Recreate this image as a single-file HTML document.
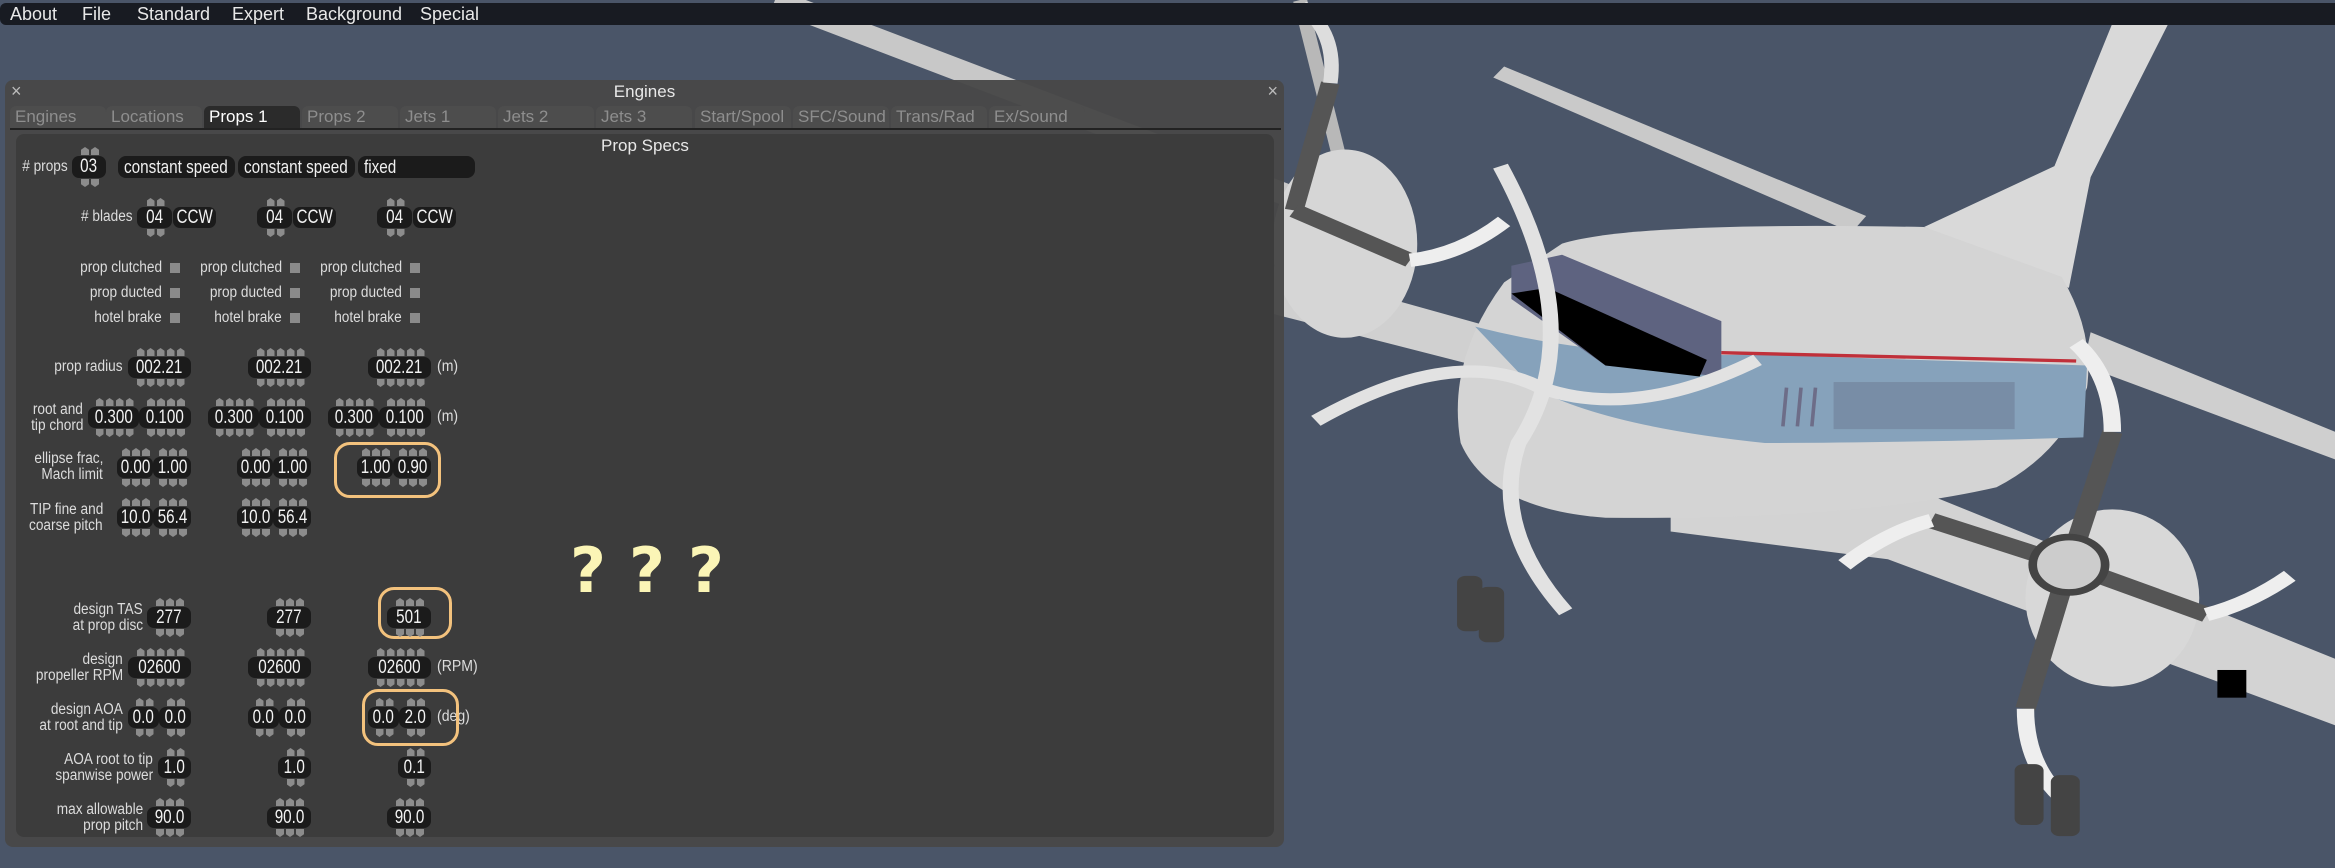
<!DOCTYPE html>
<html><head><meta charset="utf-8">
<style>
*{margin:0;padding:0;box-sizing:border-box}
body{width:2335px;height:868px;overflow:hidden;background:#4a5568;position:relative;font-family:"Liberation Sans Narrow","Liberation Sans",sans-serif;color:#e6e6e6}
#menu{position:absolute;left:0;top:3px;width:2335px;height:22px;background:#181b22;border-radius:6px 0 0 6px}
#menu span{position:absolute;top:0;font-size:18px;line-height:22px;color:#e8e8e8}
#panel{position:absolute;left:5px;top:80px;width:1279px;height:767px;background:rgba(72,72,72,0.97);border-radius:8px}
.tab{position:absolute;top:26px;width:96px;height:22px;background:#4d4d4d;border-radius:6px 6px 0 0;color:#8e8e8e;font-size:17px;line-height:22px;padding-left:5px;white-space:nowrap}
.tab.a{background:#2b2b2b;color:#fff}
#content{position:absolute;left:11px;top:54px;width:1258px;height:703px;background:#3c3c3c;border-radius:8px}
.l{position:absolute;width:200px;text-align:right;font-size:15.5px;line-height:16px;color:#dcdcdc;white-space:nowrap}
.f{position:absolute;height:21px;background:#1b1b1b;border-radius:7px;color:#f2f2f2;font-size:19px;line-height:21px;text-align:center;white-space:nowrap}
.dd{position:absolute;top:76px;height:22px;background:#1b1b1b;border-radius:8px;font-size:18px;line-height:22px;padding-left:6px;color:#f0f0f0;white-space:nowrap}
.s{display:inline-block}
.l .s{transform:scaleX(.88);transform-origin:right center}
.f .s{transform:scaleX(.8);transform-origin:center center;margin:0 -20px}
.dd .s{transform:scaleX(.85);transform-origin:left center}
.u .s{transform:scaleX(.88);transform-origin:left center}
.cb{position:absolute;width:10px;height:10px;background:#8a8a8a}
.ar{position:absolute;width:8px;height:8px;background:#8c8c8c}
.up{clip-path:polygon(50% 0,100% 35%,100% 100%,0 100%,0 35%)}
.dn{clip-path:polygon(0 0,100% 0,100% 65%,50% 100%,0 65%)}
.o{position:absolute;border:3px solid #f3c27d;border-radius:16px}
.u{position:absolute;font-size:16px;color:#dcdcdc;white-space:nowrap}
.q{position:absolute;top:536px;font-family:"DejaVu Sans",sans-serif;font-weight:bold;font-size:62px;color:#fbf5b6;line-height:70px}
</style></head><body>
<svg width="2335" height="868" style="position:absolute;left:0;top:0">
<line x1="775" y1="0" x2="1300" y2="200" stroke="#c8c8c8" stroke-width="22"/>
<line x1="1300" y1="0" x2="1340" y2="160" stroke="#b8b8b8" stroke-width="14"/>
<g transform="translate(1200,0) scale(0.7241,0.5537)">
<polygon points="420,120 920,390 900,420 405,140" fill="#c9c9c9"/>
<polygon points="1230,600 1568,780 1568,830 1220,660" fill="#cfcfcf"/>
<polygon points="1000,410 1180,300 1270,10 1350,10 1230,320 1200,520" fill="#d9d9d9"/>
<polygon points="100,480 400,590 380,660 80,560" fill="#d0d0d0"/>
<ellipse cx="200" cy="440" rx="100" ry="170" fill="#d6d6d6"/>
<polygon points="650,890 1000,890 1568,1190 1568,1310 950,1010 650,960" fill="#d3d3d3"/>
<ellipse cx="1260" cy="1080" rx="120" ry="160" fill="#d8d8d8"/>
<path d="M500,440 Q600,400 1000,410 L1190,500 Q1235,600 1225,700 Q1190,820 1100,880 Q900,940 560,935 Q400,920 360,800 Q340,650 420,510 Z" fill="#d4d4d4"/>
<path d="M380,590 Q560,650 760,640 L1225,660 L1220,790 Q960,800 780,800 Q560,770 460,700 Z" fill="#86a2bb"/>
<polygon points="430,480 500,460 720,580 720,680 560,660 430,540" fill="#5e6380"/>
<polygon points="430,530 480,520 700,650 690,680 560,660" fill="#000"/>
<line x1="720" y1="637" x2="1210" y2="652" stroke="#c0303a" stroke-width="6"/>
<g stroke="#6d6d88" stroke-width="5"><line x1="810" y1="700" x2="805" y2="770"/><line x1="830" y1="700" x2="825" y2="770"/><line x1="850" y1="700" x2="845" y2="770"/></g>
<rect x="875" y="690" width="250" height="85" fill="#6f7f98" opacity="0.6"/>
<path d="M415,300 Q540,600 440,800 Q400,950 505,1105" stroke="#e2e2e2" stroke-width="22" fill="none"/>
<path d="M160,760 Q350,620 470,700 Q600,760 770,650" stroke="#e2e2e2" stroke-width="22" fill="none"/>
<g stroke="#555" stroke-width="28"><line x1="1200" y1="1020" x2="1010" y2="940"/><line x1="1200" y1="1020" x2="1390" y2="1110"/><line x1="1200" y1="1020" x2="1260" y2="780"/><line x1="1200" y1="1020" x2="1140" y2="1280"/></g>
<circle cx="1200" cy="1020" r="50" fill="#ccc" stroke="#444" stroke-width="12"/>
<path d="M1010,940 Q950,960 890,1020" stroke="#eee" stroke-width="24" fill="none"/>
<path d="M1390,1110 Q1450,1090 1505,1040" stroke="#eee" stroke-width="24" fill="none"/>
<path d="M1260,780 Q1260,680 1210,620" stroke="#eee" stroke-width="24" fill="none"/>
<path d="M1140,1280 Q1140,1380 1190,1440" stroke="#eee" stroke-width="24" fill="none"/>
<g stroke="#555" stroke-width="26"><line x1="130" y1="380" x2="180" y2="150"/><line x1="130" y1="380" x2="290" y2="470"/></g>
<path d="M290,470 Q360,460 420,400" stroke="#eee" stroke-width="24" fill="none"/>
<path d="M180,150 Q190,60 140,10" stroke="#ddd" stroke-width="20" fill="none"/>
<g fill="#444"><rect x="355" y="1040" width="35" height="100" rx="12"/><rect x="385" y="1060" width="35" height="100" rx="12"/><rect x="1125" y="1380" width="40" height="110" rx="12"/><rect x="1175" y="1400" width="40" height="110" rx="12"/></g>
<rect x="1405" y="1210" width="40" height="50" fill="#000"/>
</g></svg>
<div id="menu"><span style="left:10px">About</span><span style="left:82px">File</span><span style="left:137px">Standard</span><span style="left:232px">Expert</span><span style="left:306px">Background</span><span style="left:420px">Special</span></div>
<div id="panel">
<div style="position:absolute;left:6px;top:1px;font-size:18px;color:#bbb">×</div>
<div style="position:absolute;right:6px;top:1px;font-size:18px;color:#bbb">×</div>
<div style="position:absolute;left:0;width:1279px;top:2px;text-align:center;font-size:17px;color:#e8e8e8">Engines</div>
<div class="tab" style="left:5px">Engines</div><div class="tab" style="left:101px">Locations</div><div class="tab a" style="left:199px">Props 1</div><div class="tab" style="left:297px">Props 2</div><div class="tab" style="left:395px">Jets 1</div><div class="tab" style="left:493px">Jets 2</div><div class="tab" style="left:591px">Jets 3</div><div class="tab" style="left:690px">Start/Spool</div><div class="tab" style="left:788px">SFC/Sound</div><div class="tab" style="left:886px">Trans/Rad</div><div class="tab" style="left:984px">Ex/Sound</div>
<div style="position:absolute;left:5px;top:48px;width:1271px;height:2px;background:#222"></div>
<div id="content"></div>
</div>
<div id="w" style="position:absolute;left:0;top:0">
<div style="position:absolute;left:0;width:1290px;top:136px;text-align:center;font-size:17px;color:#e8e8e8">Prop Specs</div>
<div class="l" style="left:-132px;top:159px"># props</div>
<div class="f" style="left:72px;top:156px;width:34px;height:22px">03</div>
<div class="dd" style="left:118px;top:156px;width:117px">constant speed</div>
<div class="dd" style="left:238px;top:156px;width:117px">constant speed</div>
<div class="dd" style="left:358px;top:156px;width:117px">fixed</div>
<div class="l" style="left:-67px;top:209px"># blades</div>
<div class="f" style="left:137px;top:207px;width:35px">04</div><div class="f" style="left:173px;top:207px;width:43px">CCW</div>
<div class="f" style="left:257px;top:207px;width:35px">04</div><div class="f" style="left:293px;top:207px;width:43px">CCW</div>
<div class="f" style="left:377px;top:207px;width:35px">04</div><div class="f" style="left:413px;top:207px;width:43px">CCW</div>

<div class="l" style="left:-38px;top:260px">prop clutched</div><div class="cb" style="left:170px;top:263px"></div>
<div class="l" style="left:82px;top:260px">prop clutched</div><div class="cb" style="left:290px;top:263px"></div>
<div class="l" style="left:202px;top:260px">prop clutched</div><div class="cb" style="left:410px;top:263px"></div>
<div class="l" style="left:-38px;top:285px">prop ducted</div><div class="cb" style="left:170px;top:288px"></div>
<div class="l" style="left:82px;top:285px">prop ducted</div><div class="cb" style="left:290px;top:288px"></div>
<div class="l" style="left:202px;top:285px">prop ducted</div><div class="cb" style="left:410px;top:288px"></div>
<div class="l" style="left:-38px;top:310px">hotel brake</div><div class="cb" style="left:170px;top:313px"></div>
<div class="l" style="left:82px;top:310px">hotel brake</div><div class="cb" style="left:290px;top:313px"></div>
<div class="l" style="left:202px;top:310px">hotel brake</div><div class="cb" style="left:410px;top:313px"></div>

<div class="l" style="left:-77px;top:359px">prop radius</div>
<div class="f" style="left:128px;top:357px;width:63px">002.21</div><div class="f" style="left:248px;top:357px;width:63px">002.21</div><div class="f" style="left:368px;top:357px;width:63px">002.21</div><div class="u" style="left:437px;top:358px">(m)</div>

<div class="l" style="left:-117px;top:402px">root and<br>tip chord</div>
<div class="f" style="left:88px;top:407px;width:51px">0.300</div><div class="f" style="left:139px;top:407px;width:52px">0.100</div>
<div class="f" style="left:208px;top:407px;width:51px">0.300</div><div class="f" style="left:259px;top:407px;width:52px">0.100</div>
<div class="f" style="left:328px;top:407px;width:51px">0.300</div><div class="f" style="left:379px;top:407px;width:52px">0.100</div><div class="u" style="left:437px;top:408px">(m)</div>

<div class="l" style="left:-97px;top:451px">ellipse frac,<br>Mach limit</div>
<div class="f" style="left:117px;top:457px;width:36px">0.00</div><div class="f" style="left:153px;top:457px;width:38px">1.00</div>
<div class="f" style="left:237px;top:457px;width:36px">0.00</div><div class="f" style="left:273px;top:457px;width:38px">1.00</div>
<div class="f" style="left:357px;top:457px;width:36px">1.00</div><div class="f" style="left:393px;top:457px;width:38px">0.90</div>
<div class="o" style="left:334px;top:442px;width:107px;height:56px"></div>

<div class="l" style="left:-97px;top:502px">TIP fine and<br>coarse pitch</div>
<div class="f" style="left:117px;top:507px;width:36px">10.0</div><div class="f" style="left:153px;top:507px;width:38px">56.4</div>
<div class="f" style="left:237px;top:507px;width:36px">10.0</div><div class="f" style="left:273px;top:507px;width:38px">56.4</div>

<div class="q" style="left:570px">?</div><div class="q" style="left:629px">?</div><div class="q" style="left:688px">?</div>

<div class="l" style="left:-57px;top:602px">design TAS<br>at prop disc</div>
<div class="f" style="left:147px;top:607px;width:44px">277</div><div class="f" style="left:267px;top:607px;width:44px">277</div><div class="f" style="left:387px;top:607px;width:44px">501</div>
<div class="o" style="left:378px;top:587px;width:74px;height:52px"></div>

<div class="l" style="left:-77px;top:652px">design<br>propeller RPM</div>
<div class="f" style="left:128px;top:657px;width:63px">02600</div><div class="f" style="left:248px;top:657px;width:63px">02600</div><div class="f" style="left:368px;top:657px;width:63px">02600</div><div class="u" style="left:437px;top:658px">(RPM)</div>

<div class="l" style="left:-77px;top:702px">design AOA<br>at root and tip</div>
<div class="f" style="left:128px;top:707px;width:31px">0.0</div><div class="f" style="left:159px;top:707px;width:32px">0.0</div>
<div class="f" style="left:248px;top:707px;width:31px">0.0</div><div class="f" style="left:279px;top:707px;width:32px">0.0</div>
<div class="f" style="left:368px;top:707px;width:31px">0.0</div><div class="f" style="left:399px;top:707px;width:32px">2.0</div><div class="u" style="left:437px;top:708px">(deg)</div>
<div class="o" style="left:362px;top:689px;width:97px;height:57px"></div>

<div class="l" style="left:-47px;top:752px">AOA root to tip<br>spanwise power</div>
<div class="f" style="left:158px;top:757px;width:33px">1.0</div><div class="f" style="left:278px;top:757px;width:33px">1.0</div><div class="f" style="left:398px;top:757px;width:33px">0.1</div>

<div class="l" style="left:-57px;top:802px">max allowable<br>prop pitch</div>
<div class="f" style="left:147px;top:807px;width:44px">90.0</div><div class="f" style="left:267px;top:807px;width:44px">90.0</div><div class="f" style="left:387px;top:807px;width:44px">90.0</div>
</div>
<script>
document.querySelectorAll('#w .f').forEach(function(f){
  var t=f.textContent;if(!/^[0-9.]+$/.test(t))return;
  var n=t.replace(/\./g,'').length;
  var L=parseFloat(f.style.left),T=parseFloat(f.style.top),W=parseFloat(f.style.width),H=f.offsetHeight||21;
  var span=n*10-2,x0=L+W/2-span/2+1;
  for(var i=0;i<n;i++){
    var u=document.createElement('div');u.className='ar up';u.style.left=(x0+i*10)+'px';u.style.top=(T-9)+'px';
    var d=document.createElement('div');d.className='ar dn';d.style.left=(x0+i*10)+'px';d.style.top=(T+H+1)+'px';
    f.parentNode.appendChild(u);f.parentNode.appendChild(d);
  }
});
document.querySelectorAll('#w .f, #w .l, #w .dd, #w .u').forEach(function(e){
  var parts=e.innerHTML.split('<br>');
  e.innerHTML=parts.map(function(p){return '<span class="s">'+p+'</span>';}).join('<br>');
});
</script>
</body></html>
